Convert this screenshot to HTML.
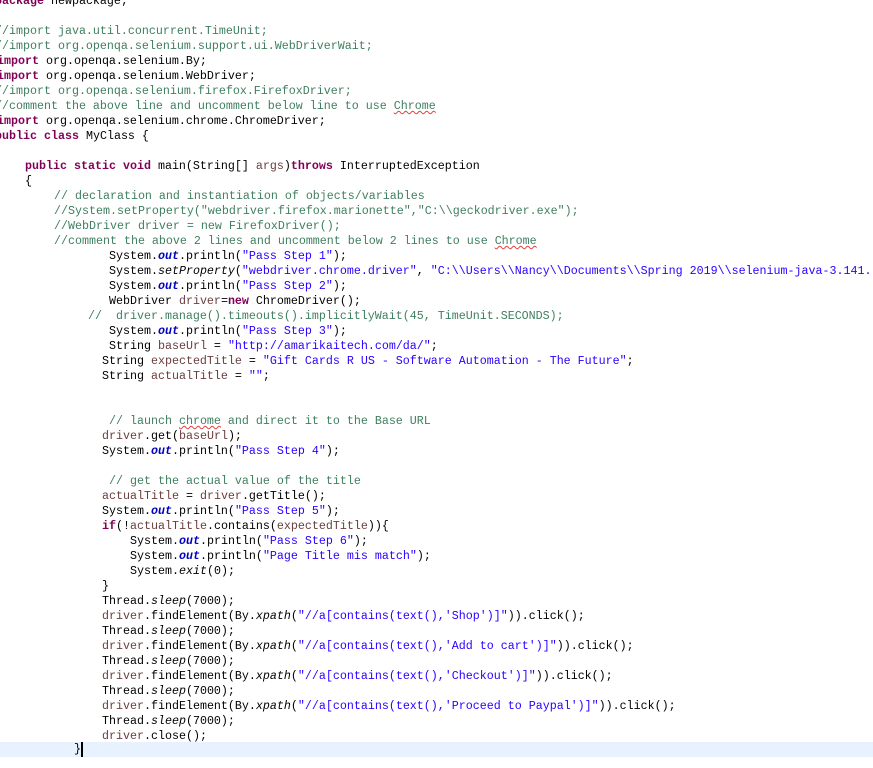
<!DOCTYPE html>
<html><head><meta charset="utf-8"><style>
html,body{margin:0;padding:0;background:#fff;width:873px;height:766px;overflow:hidden;}
.w{position:absolute;left:0;top:2px;width:873px;height:766px}
.l{position:absolute;white-space:pre;font-family:"Liberation Mono",monospace;font-size:11.67px;line-height:15px;height:15px;color:#000;}
.k{color:#7f0055;font-weight:bold}
.c{color:#3f7f5f}
.s{color:#2a00ff}
.f{color:#0000c0;font-weight:bold;font-style:italic}
.i{font-style:italic}
.v{color:#6a3e3e}
.sq{text-decoration:underline wavy #e04040;text-decoration-thickness:1px}
#hl{position:absolute;left:0;top:742px;width:873px;height:15px;background:#e8f2fe}
#cur{position:absolute;left:81px;top:742px;width:2px;height:15px;background:#000}
</style></head><body>
<div id="hl"></div>
<div class="w">
<div class="l" style="top:-8px;left:-5px"><span class="k">package</span> newpackage;</div>
<div class="l" style="top:22px;left:-5px"><span class="c">//import java.util.concurrent.TimeUnit;</span></div>
<div class="l" style="top:37px;left:-5px"><span class="c">//import org.openqa.selenium.support.ui.WebDriverWait;</span></div>
<div class="l" style="top:52px;left:-3px"><span class="k">import</span> org.openqa.selenium.By;</div>
<div class="l" style="top:67px;left:-3px"><span class="k">import</span> org.openqa.selenium.WebDriver;</div>
<div class="l" style="top:82px;left:-5px"><span class="c">//import org.openqa.selenium.firefox.FirefoxDriver;</span></div>
<div class="l" style="top:97px;left:-5px"><span class="c">//comment the above line and uncomment below line to use <span class="sq">Chrome</span></span></div>
<div class="l" style="top:112px;left:-3px"><span class="k">import</span> org.openqa.selenium.chrome.ChromeDriver;</div>
<div class="l" style="top:127px;left:-5px"><span class="k">public</span> <span class="k">class</span> MyClass {</div>
<div class="l" style="top:157px;left:25px"><span class="k">public</span> <span class="k">static</span> <span class="k">void</span> main(String[] <span class="v">args</span>)<span class="k">throws</span> InterruptedException</div>
<div class="l" style="top:172px;left:25px">{</div>
<div class="l" style="top:187px;left:54px"><span class="c">// declaration and instantiation of objects/variables</span></div>
<div class="l" style="top:202px;left:54px"><span class="c">//System.setProperty("webdriver.firefox.marionette","C:\\geckodriver.exe");</span></div>
<div class="l" style="top:217px;left:54px"><span class="c">//WebDriver driver = new FirefoxDriver();</span></div>
<div class="l" style="top:232px;left:54px"><span class="c">//comment the above 2 lines and uncomment below 2 lines to use <span class="sq">Chrome</span></span></div>
<div class="l" style="top:247px;left:109px">System.<span class="f">out</span>.println(<span class="s">"Pass Step 1"</span>);</div>
<div class="l" style="top:262px;left:109px">System.<span class="i">setProperty</span>(<span class="s">"webdriver.chrome.driver"</span>, <span class="s">"C:\\Users\\Nancy\\Documents\\Spring 2019\\selenium-java-3.141.</span></div>
<div class="l" style="top:277px;left:109px">System.<span class="f">out</span>.println(<span class="s">"Pass Step 2"</span>);</div>
<div class="l" style="top:292px;left:109px">WebDriver <span class="v">driver</span>=<span class="k">new</span> ChromeDriver();</div>
<div class="l" style="top:307px;left:88px"><span class="c">//  driver.manage().timeouts().implicitlyWait(45, TimeUnit.SECONDS);</span></div>
<div class="l" style="top:322px;left:109px">System.<span class="f">out</span>.println(<span class="s">"Pass Step 3"</span>);</div>
<div class="l" style="top:337px;left:109px">String <span class="v">baseUrl</span> = <span class="s">"http://amarikaitech.com/da/"</span>;</div>
<div class="l" style="top:352px;left:102px">String <span class="v">expectedTitle</span> = <span class="s">"Gift Cards R US - Software Automation - The Future"</span>;</div>
<div class="l" style="top:367px;left:102px">String <span class="v">actualTitle</span> = <span class="s">""</span>;</div>
<div class="l" style="top:412px;left:109px"><span class="c">// launch <span class="sq">chrome</span> and direct it to the Base URL</span></div>
<div class="l" style="top:427px;left:102px"><span class="v">driver</span>.get(<span class="v">baseUrl</span>);</div>
<div class="l" style="top:442px;left:102px">System.<span class="f">out</span>.println(<span class="s">"Pass Step 4"</span>);</div>
<div class="l" style="top:472px;left:109px"><span class="c">// get the actual value of the title</span></div>
<div class="l" style="top:487px;left:102px"><span class="v">actualTitle</span> = <span class="v">driver</span>.getTitle();</div>
<div class="l" style="top:502px;left:102px">System.<span class="f">out</span>.println(<span class="s">"Pass Step 5"</span>);</div>
<div class="l" style="top:517px;left:102px"><span class="k">if</span>(!<span class="v">actualTitle</span>.contains(<span class="v">expectedTitle</span>)){</div>
<div class="l" style="top:532px;left:130px">System.<span class="f">out</span>.println(<span class="s">"Pass Step 6"</span>);</div>
<div class="l" style="top:547px;left:130px">System.<span class="f">out</span>.println(<span class="s">"Page Title mis match"</span>);</div>
<div class="l" style="top:562px;left:130px">System.<span class="i">exit</span>(0);</div>
<div class="l" style="top:577px;left:102px">}</div>
<div class="l" style="top:592px;left:102px">Thread.<span class="i">sleep</span>(7000);</div>
<div class="l" style="top:607px;left:102px"><span class="v">driver</span>.findElement(By.<span class="i">xpath</span>(<span class="s">"//a[contains(text(),'Shop')]"</span>)).click();</div>
<div class="l" style="top:622px;left:102px">Thread.<span class="i">sleep</span>(7000);</div>
<div class="l" style="top:637px;left:102px"><span class="v">driver</span>.findElement(By.<span class="i">xpath</span>(<span class="s">"//a[contains(text(),'Add to cart')]"</span>)).click();</div>
<div class="l" style="top:652px;left:102px">Thread.<span class="i">sleep</span>(7000);</div>
<div class="l" style="top:667px;left:102px"><span class="v">driver</span>.findElement(By.<span class="i">xpath</span>(<span class="s">"//a[contains(text(),'Checkout')]"</span>)).click();</div>
<div class="l" style="top:682px;left:102px">Thread.<span class="i">sleep</span>(7000);</div>
<div class="l" style="top:697px;left:102px"><span class="v">driver</span>.findElement(By.<span class="i">xpath</span>(<span class="s">"//a[contains(text(),'Proceed to Paypal')]"</span>)).click();</div>
<div class="l" style="top:712px;left:102px">Thread.<span class="i">sleep</span>(7000);</div>
<div class="l" style="top:727px;left:102px"><span class="v">driver</span>.close();</div>
<div class="l" style="top:740px;left:74px">}</div>
</div>
<div id="cur"></div>
</body></html>
